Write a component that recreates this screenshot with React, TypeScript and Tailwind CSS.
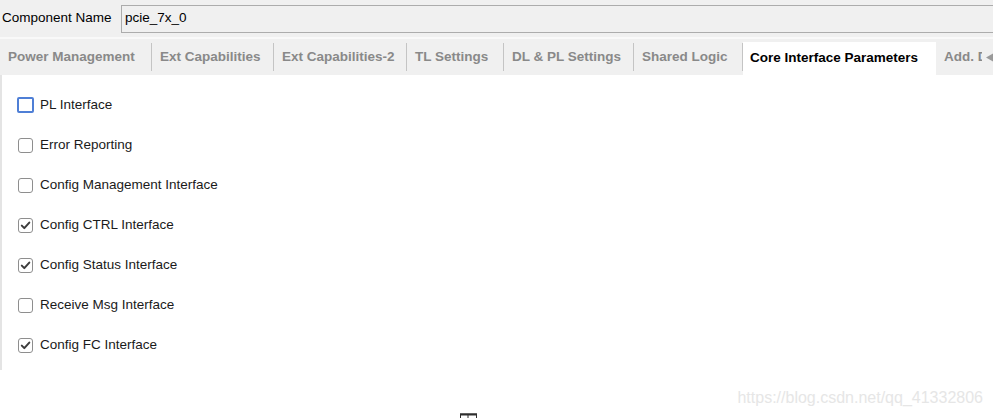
import React from "react";

const tabs = [
  { label: "Power Management", w: 151 },
  { label: "Ext Capabilities", w: 121 },
  { label: "Ext Capabilities-2", w: 132 },
  { label: "TL Settings", w: 96 },
  { label: "DL & PL Settings", w: 129 },
  { label: "Shared Logic", w: 108 },
];

const items = [
  { label: "PL Interface", checked: false, focused: true },
  { label: "Error Reporting", checked: false },
  { label: "Config Management Interface", checked: false },
  { label: "Config CTRL Interface", checked: true },
  { label: "Config Status Interface", checked: true },
  { label: "Receive Msg Interface", checked: false },
  { label: "Config FC Interface", checked: true },
];

function Box({ checked, focused }: { checked: boolean; focused?: boolean }) {
  return (
    <div className="w-[15px] h-[15px] flex items-center justify-center shrink-0">
      <div
        className={
          focused
            ? "w-[17px] h-[16px] shrink-0 rounded-[2px] border-2 border-[#4f7fd6] bg-white"
            : "w-[15px] h-[15px] shrink-0 rounded-[3px] border border-[#8e8e8e] bg-white flex items-center justify-center"
        }
      >
        {checked && (
          <svg width="11" height="11" viewBox="0 0 11 11">
            <path d="M1.8 5.6 L4.3 8.1 L9.3 2.6" fill="none" stroke="#3c3c3c" strokeWidth="2" strokeLinecap="round" strokeLinejoin="round" />
          </svg>
        )}
      </div>
    </div>
  );
}

export default function App() {
  return (
    <div
      className="w-[993px] h-[418px] bg-white overflow-hidden relative"
      style={{ fontFamily: '"Liberation Sans", Arial, sans-serif' }}
    >
      {/* header */}
      <div className="h-[37px] bg-[#f0f0f0] flex items-center">
        <span className="pl-[2px] w-[121px] text-[13.5px] text-black">Component Name</span>
        <div className="flex-1 h-[28px] border border-r-0 border-[#acacac] bg-[#f0f0f0] flex items-center pl-[3px] text-[13.5px] text-black">
          pcie_7x_0
        </div>
      </div>
      <div className="h-[2px] bg-[#f9f9f9]" />
      {/* tab bar */}
      <div className="h-[36px] bg-[#f0f0f0] flex items-stretch text-[13.5px] font-bold">
        {tabs.map((t) => (
          <React.Fragment key={t.label}>
            <div className="flex items-center pl-[8px] pt-[1px] text-[#898989] whitespace-nowrap shrink-0" style={{ width: t.w }}>
              {t.label}
            </div>
            <div className="w-px self-center h-[28px] bg-[#c4c4c4] shrink-0" />
          </React.Fragment>
        ))}
        <div className="w-[193px] mt-[3px] bg-white flex items-center pl-[7px] text-black whitespace-nowrap shrink-0">
          Core Interface Parameters
        </div>
        <div className="w-[46px] flex items-center pl-[8px] pt-[1px] text-[#898989] whitespace-nowrap overflow-hidden shrink-0">
          Add. D
        </div>
        <div className="flex-1 flex items-center pl-[4px]">
          <svg width="8" height="9" viewBox="0 0 8 9">
            <path d="M0 4.5 L8 0 L8 9 Z" fill="#9a9a9a" />
          </svg>
        </div>
      </div>
      {/* content */}
      <div className="h-[295px] border-l-2 border-[#e4e4e4] bg-white pt-[10px] pl-[16px]">
        {items.map((it) => (
          <div key={it.label} className="h-[40px] flex items-center">
            <Box checked={it.checked} focused={it.focused} />
            <span className="ml-[7px] text-[13.5px] text-[#1a1a1a] whitespace-nowrap">{it.label}</span>
          </div>
        ))}
      </div>
      {/* watermark */}
      <div className="absolute right-[10px] top-[389px] text-[16px] leading-[18px] text-[#e6e6e6] whitespace-nowrap">
        https://blog.csdn.net/qq_41332806
      </div>
      {/* cut-off icon at bottom */}
      <svg className="absolute left-[460px] top-[413px]" width="18" height="10" viewBox="0 0 18 10">
        <rect x="0.5" y="1" width="16" height="10" fill="none" stroke="#2e2e2e" strokeWidth="1" />
        <line x1="0" y1="1.5" x2="17" y2="1.5" stroke="#2e2e2e" strokeWidth="2" />
        <line x1="8" y1="1" x2="8" y2="10" stroke="#2e2e2e" strokeWidth="1" />
      </svg>
    </div>
  );
}
